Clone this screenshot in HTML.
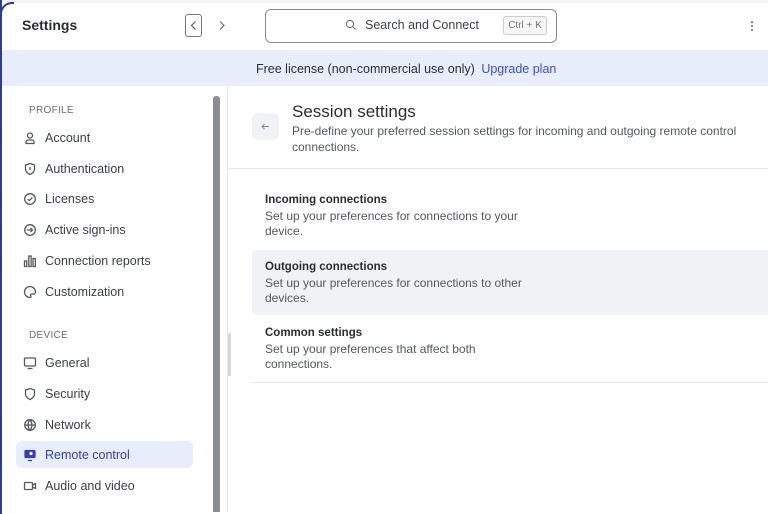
<!DOCTYPE html><html><head><style>
*{margin:0;padding:0;box-sizing:border-box}
body{width:768px;height:512px;overflow:hidden;background:#fff;font-family:"Liberation Sans",sans-serif;color:#2b2d33;position:relative}
.a{position:absolute}
.nav{position:absolute;left:16px;width:177px;height:27px;display:flex;align-items:center;font-size:12.5px;color:#3d4048}
.nav svg{width:14px;height:14px;margin:0 8px 0 7px;fill:none;stroke:#55585f;stroke-width:1.3}
.sec{position:absolute;left:29px;font-size:10px;color:#6b6e75;letter-spacing:.3px}
.item{position:absolute;left:265px;font-size:12px;line-height:15.5px;color:#55585f}
.item b{display:block;color:#2b2d33;font-weight:bold;font-size:11.5px}
</style></head><body>
<div class="a" style="left:0;top:0;width:768px;height:3px;background:#f0f2f6"></div>
<div class="a" style="left:0;top:0;width:14px;height:512px;border-left:2px solid #2c3c9c;border-top:2px solid #2c3c9c;border-top-left-radius:12px;top:2px"></div>
<div class="a" style="left:22px;top:17px;font-size:14px;font-weight:bold">Settings</div>
<div class="a" style="left:185px;top:14px;width:17px;height:23px;border:1px solid #777;border-radius:3px"></div>
<svg class="a" style="left:185px;top:14px" width="17" height="23"><path d="M10.5 7.5 6.5 11.5 10.5 15.5" fill="none" stroke="#555" stroke-width="1.1"/></svg>
<svg class="a" style="left:214px;top:14px" width="17" height="23"><path d="M6 7.5 10 11.5 6 15.5" fill="none" stroke="#666" stroke-width="1.1"/></svg>
<div class="a" style="left:265px;top:9px;width:292px;height:34px;border:1px solid #8a8c91;border-radius:6px"></div>
<svg class="a" style="left:345px;top:19px" width="12" height="12"><circle cx="5" cy="5" r="3.6" fill="none" stroke="#666" stroke-width="1"/><path d="M7.7 7.7 10.5 10.5" stroke="#666"/></svg>
<div class="a" style="left:365px;top:18px;font-size:12.5px;color:#3d4048">Search and Connect</div>
<div class="a" style="left:503px;top:16px;width:44px;height:19px;border:1px solid #ccc;border-radius:3px;background:#f6f6f7;font-size:10px;color:#777;text-align:center;line-height:17px">Ctrl + K</div>
<div class="a" style="left:751px;top:20px;width:2px;height:11px;background:radial-gradient(circle,#666 1px,transparent 1px) 0 0/2px 4px"></div>
<div class="a" style="left:0;top:50px;width:768px;height:36px;background:#e8edfb"></div>
<div class="a" style="left:256px;top:62px;font-size:12.5px;color:#2b2d33">Free license (non-commercial use only) <span style="color:#3b4fd0;margin-left:3px">Upgrade plan</span></div>
<div class="a" style="left:0;top:0;width:2px;height:512px;background:#2c3c9c"></div>
<div class="a" style="left:227px;top:86px;width:1px;height:426px;background:#e6e7ea"></div>
<div class="a" style="left:213px;top:96px;width:7px;height:416px;background:#8a8d92;border-radius:3px 3px 0 0"></div>
<div class="a" style="left:228px;top:333px;width:3px;height:43px;background:#d8d9dc"></div>
<div class="sec" style="top:105px">PROFILE</div>
<div class="nav" style="top:124px"><svg viewBox="0 0 14 14"><circle cx="7" cy="4.5" r="2.5"/><path d="M3 12.5v-1.5a2 2 0 0 1 2-2h4a2 2 0 0 1 2 2v1.5z"/></svg>Account</div>
<div class="nav" style="top:155px"><svg viewBox="0 0 14 14"><path d="M7 1.5 11.5 3v4c0 3-2.5 4.5-4.5 5.5C5 11.5 2.5 10 2.5 7V3z"/><path d="M7 5v3"/></svg>Authentication</div>
<div class="nav" style="top:185px"><svg viewBox="0 0 14 14"><circle cx="7" cy="7" r="5.3"/><path d="M4.8 7.2 6.3 8.6 9.3 5.6"/></svg>Licenses</div>
<div class="nav" style="top:216px"><svg viewBox="0 0 14 14"><circle cx="7" cy="7" r="5.3"/><path d="M4 7h5.5M7.5 5 9.5 7 7.5 9"/></svg>Active sign-ins</div>
<div class="nav" style="top:247px"><svg viewBox="0 0 14 14"><rect x="1.5" y="7" width="2.3" height="5.5"/><rect x="5.8" y="2" width="2.3" height="10.5"/><rect x="10" y="4.5" width="2.3" height="8"/></svg>Connection reports</div>
<div class="nav" style="top:278px"><svg viewBox="0 0 14 14"><path d="M7 1.5a5.5 5.5 0 1 0 0 11c1 0 1.2-1 .7-1.7s-.2-1.8 1-1.8h1.8a2 2 0 0 0 2-2C12.5 4 10 1.5 7 1.5z"/></svg>Customization</div>
<div class="sec" style="top:330px">DEVICE</div>
<div class="nav" style="top:349px"><svg viewBox="0 0 14 14"><rect x="1.5" y="2" width="11" height="8" rx="1"/><path d="M4.5 12.5h5"/></svg>General</div>
<div class="nav" style="top:380px"><svg viewBox="0 0 14 14"><path d="M7 1.5 11.5 3v4c0 3-2.5 4.5-4.5 5.5C5 11.5 2.5 10 2.5 7V3z"/></svg>Security</div>
<div class="nav" style="top:411px"><svg viewBox="0 0 14 14"><circle cx="7" cy="7" r="5.3"/><path d="M1.7 7h10.6M7 1.7c-2.5 3-2.5 7.6 0 10.6M7 1.7c2.5 3 2.5 7.6 0 10.6"/></svg>Network</div>
<div class="nav" style="top:441px;background:#e8edfb;border-radius:6px;color:#3142b5"><svg viewBox="0 0 14 14" style="stroke:#3142b5"><rect x="2" y="2.5" width="10" height="7" rx="1" fill="#3142b5"/><circle cx="8" cy="5.5" r="1.6" fill="#fff" stroke="none"/><path d="M5 12.5h4"/></svg>Remote control</div>
<div class="nav" style="top:472px"><svg viewBox="0 0 14 14"><rect x="1.5" y="3.5" width="8" height="7" rx="1"/><path d="M9.5 6 12.5 4.5v5L9.5 8"/></svg>Audio and video</div>
<div class="a" style="left:252px;top:113px;width:27px;height:27px;background:#f1f2f5;border-radius:6px"></div>
<svg class="a" style="left:252px;top:113px" width="27" height="27"><path d="M10 13.5h7M12.5 11 10 13.5 12.5 16" fill="none" stroke="#888" stroke-width=".9"/></svg>
<div class="a" style="left:292px;top:102px;font-size:17px;color:#2b2d33">Session settings</div>
<div class="a" style="left:292px;top:124px;font-size:12px;line-height:15.5px;color:#55585f;width:476px">Pre-define your preferred session settings for incoming and outgoing remote control connections.</div>
<div class="a" style="left:228px;top:168px;width:540px;height:1px;background:#e6e7ea"></div>
<div class="a" style="left:252px;top:250px;width:516px;height:65px;background:#f1f2f5;border-radius:5px 0 0 5px"></div>
<div class="item" style="top:193px"><b>Incoming connections</b>Set up your preferences for connections to your<br>device.</div>
<div class="item" style="top:260px"><b>Outgoing connections</b>Set up your preferences for connections to other<br>devices.</div>
<div class="item" style="top:326px"><b>Common settings</b>Set up your preferences that affect both<br>connections.</div>
<div class="a" style="left:252px;top:382px;width:516px;height:1px;background:#e6e7ea"></div>
</body></html>
